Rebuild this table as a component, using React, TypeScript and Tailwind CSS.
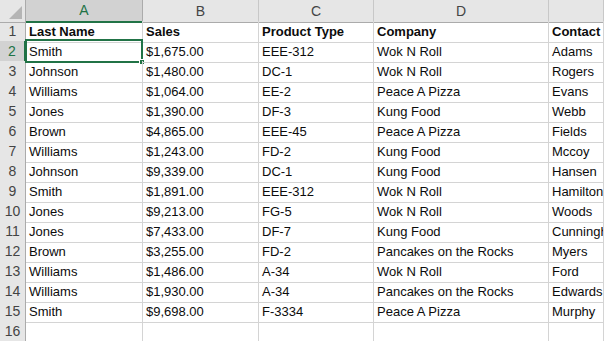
type Row = [string, string, string, string, string];

const columns = ["A", "B", "C", "D", ""];

const rows: Row[] = [
  ["Last Name", "Sales", "Product Type", "Company", "Contact Name"],
  ["Smith", "$1,675.00", "EEE-312", "Wok N Roll", "Adams"],
  ["Johnson", "$1,480.00", "DC-1", "Wok N Roll", "Rogers"],
  ["Williams", "$1,064.00", "EE-2", "Peace A Pizza", "Evans"],
  ["Jones", "$1,390.00", "DF-3", "Kung Food", "Webb"],
  ["Brown", "$4,865.00", "EEE-45", "Peace A Pizza", "Fields"],
  ["Williams", "$1,243.00", "FD-2", "Kung Food", "Mccoy"],
  ["Johnson", "$9,339.00", "DC-1", "Kung Food", "Hansen"],
  ["Smith", "$1,891.00", "EEE-312", "Wok N Roll", "Hamilton"],
  ["Jones", "$9,213.00", "FG-5", "Wok N Roll", "Woods"],
  ["Jones", "$7,433.00", "DF-7", "Kung Food", "Cunningham"],
  ["Brown", "$3,255.00", "FD-2", "Pancakes on the Rocks", "Myers"],
  ["Williams", "$1,486.00", "A-34", "Wok N Roll", "Ford"],
  ["Williams", "$1,930.00", "A-34", "Pancakes on the Rocks", "Edwards"],
  ["Smith", "$9,698.00", "F-3334", "Peace A Pizza", "Murphy"],
  ["", "", "", "", ""],
];

const gridCols = "grid grid-cols-[26px_117px_116px_115px_175px_1fr]";

const App: React.FC = () => {
  return (
    <div className="w-[604px] h-[341px] overflow-hidden bg-white font-['Liberation_Sans',sans-serif] text-[13px] text-[#0c0c0c]">
      {/* Column headers */}
      <div className={`${gridCols} h-[21px]`}>
        <div className="relative bg-[#e6e6e6] border-r border-b border-[#ababab]">
          <svg className="absolute right-[3px] bottom-[3px]" width="13" height="13" viewBox="0 0 13 13">
            <polygon points="13,0 13,13 0,13" fill="#b5b5b5" />
          </svg>
        </div>
        {columns.map((c, i) => (
          <div
            key={i}
            className={
              i === 0
                ? "flex items-center justify-center bg-[#d2d2d2] text-[#217346] border-r border-[#ababab] border-b-2 border-b-[#217346] text-[14px]"
                : "flex items-center justify-center bg-[#e6e6e6] text-[#444] border-r border-b border-r-[#c8c8c8] border-b-[#ababab] text-[14px]"
            }
          >
            {c}
          </div>
        ))}
      </div>

      {/* Rows */}
      {rows.map((row, r) => (
        <div key={r} className={`${gridCols} h-[20px]`}>
          <div
            className={
              r === 1
                ? "flex items-center justify-center bg-[#d2d2d2] text-[#217346] border-b border-b-[#c8c8c8] border-r-2 border-r-[#217346] text-[14px]"
                : "flex items-center justify-center bg-[#e6e6e6] text-[#444] border-b border-r border-b-[#c8c8c8] border-r-[#ababab] text-[14px]"
            }
          >
            {r + 1}
          </div>
          {row.map((v, c) => (
            <div
              key={c}
              className={`relative flex items-center pl-[3px] whitespace-nowrap border-r border-b border-[#d4d4d4] ${
                r === 0 ? "font-bold" : ""
              } ${c === 4 ? "overflow-hidden" : ""}`}
            >
              {v}
              {r === 1 && c === 0 && (
                <div className="absolute -left-[1px] -top-[2px] -right-[1px] -bottom-[1px] border-2 border-[#217346] pointer-events-none">
                  <div className="absolute -right-[4px] -bottom-[4px] w-[6px] h-[6px] bg-[#217346] border border-white" />
                </div>
              )}
            </div>
          ))}
        </div>
      ))}
    </div>
  );
};

export default App;
